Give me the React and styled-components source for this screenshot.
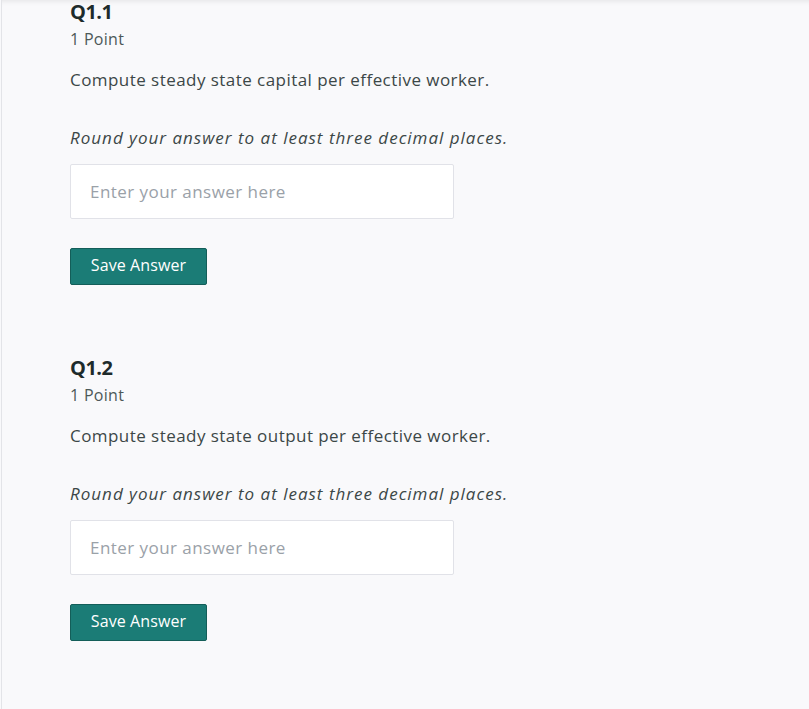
import React from 'react';
import styled, { createGlobalStyle } from 'styled-components';

const GlobalStyle = createGlobalStyle`
  html, body {
    margin: 0;
    padding: 0;
    background: #f9f9fb;
  }
  body {
    font-family: "Open Sans", Lato, sans-serif;
  }
`;

const Page = styled.main`
  min-height: 709px;
  margin-left: 1px;
  border-left: 1px solid #e3e4e8;
  background: #f9f9fb;
  box-shadow: inset 0 6px 6px -6px rgba(0, 0, 0, 0.12);
  padding-left: 68px;
  padding-top: 1px;
  box-sizing: border-box;
`;

const Question = styled.section`
  padding-bottom: 72px;
`;

const Title = styled.h2`
  margin: 0;
  font-size: 20px;
  line-height: 22px;
  font-weight: 700;
  letter-spacing: -0.5px;
  color: #1e2b2b;
`;

const Points = styled.div`
  margin-top: 5px;
  font-size: 16px;
  line-height: 22px;
  letter-spacing: 0.3px;
  color: #4d5858;
`;

const Prompt = styled.p`
  margin: ${p => p.$top}px 0 0;
  font-size: 17px;
  line-height: 24px;
  letter-spacing: ${p => (p.$italic ? '1px' : '0.45px')};
  color: #3c4747;
  font-style: ${p => (p.$italic ? 'italic' : 'normal')};
`;

const AnswerInput = styled.input`
  display: block;
  box-sizing: border-box;
  width: 384px;
  height: 55px;
  margin-top: 14px;
  padding: 0 19px;
  border: 1px solid #e1e2e8;
  border-radius: 2px;
  background: #fff;
  font-family: inherit;
  font-size: 17px;
  letter-spacing: 0.45px;
  color: #3c4747;
  outline: none;

  &::placeholder {
    color: #9aa1a8;
  }
`;

const SaveButton = styled.button`
  display: block;
  box-sizing: border-box;
  width: 137px;
  height: 37px;
  margin-top: 29px;
  padding: 0 0 3px;
  border: 1px solid #145e59;
  border-radius: 2px;
  background: #1b7c76;
  color: #fff;
  font-family: inherit;
  font-size: 16px;
  letter-spacing: 0.1px;
  cursor: pointer;
`;

const questions = [
  { id: 'Q1.1', text: 'Compute steady state capital per effective worker.' },
  { id: 'Q1.2', text: 'Compute steady state output per effective worker.' },
];

export default function App() {
  return (
    <>
      <GlobalStyle />
      <Page>
        {questions.map(q => (
          <Question key={q.id}>
            <Title>{q.id}</Title>
            <Points>1 Point</Points>
            <Prompt $top={18}>{q.text}</Prompt>
            <Prompt $top={34} $italic>Round your answer to at least three decimal places.</Prompt>
            <AnswerInput placeholder="Enter your answer here" />
            <SaveButton>Save Answer</SaveButton>
          </Question>
        ))}
      </Page>
    </>
  );
}
